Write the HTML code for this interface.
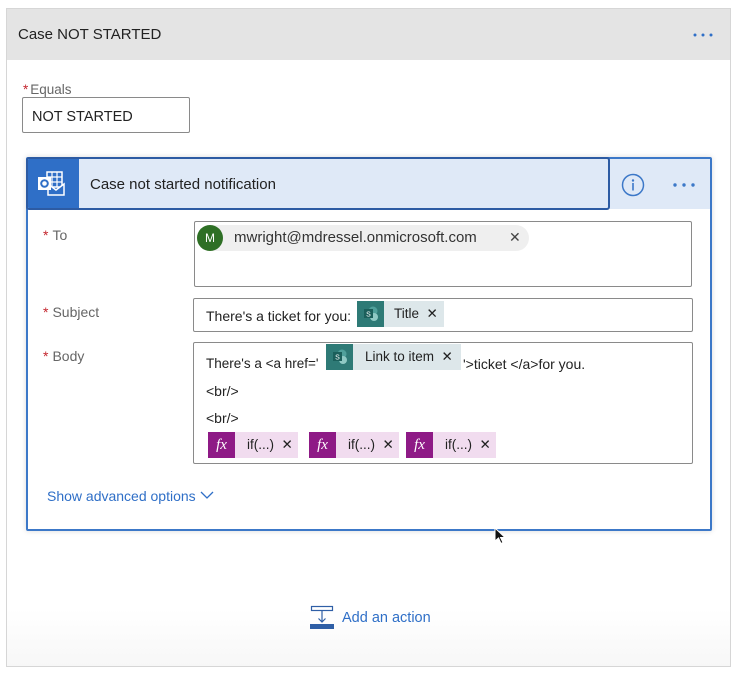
<!DOCTYPE html>
<html><head><meta charset="utf-8"><style>
*{box-sizing:border-box;margin:0;padding:0}
body{width:736px;height:676px;background:#fff;font-family:"Liberation Sans",sans-serif;position:relative;overflow:hidden;color:#222}
.abs{position:absolute}
.outer{left:6px;top:8px;width:725px;height:659px;border:1px solid #d6d6d6;background:linear-gradient(#fff 600px,#f7f7f7)}
.hdr{left:7px;top:9px;width:723px;height:51px;background:#e4e4e4}
.lbl{font-size:14px;color:#666}
.req{color:#c4262e;margin-right:4px}
.box{border:1px solid #8a8a8a;background:#fff;border-radius:2px}
.tok{display:inline-flex;align-items:center;height:26px;vertical-align:middle}
.sp{width:27px;height:26px;background:#2e7a76;display:flex;align-items:center;justify-content:center}
.spt{background:#dde7ea;height:26px;padding:0 6px 0 10px;font-size:13.5px;display:flex;align-items:center;color:#222}
.fx{width:27px;height:26px;background:#8e1a86;color:#fff;font-family:"Liberation Serif",serif;font-style:italic;font-size:15px;display:flex;align-items:center;justify-content:center}
.fxt{background:#f1dcef;height:26px;padding:0 5px 0 12px;font-size:13.5px;display:flex;align-items:center}
.t{font-size:14px;color:#222}
</style></head><body>
<div class="abs outer"></div>
<div class="abs hdr"></div>
<div class="abs" style="left:18px;top:26px;font-size:15px;color:#222">Case NOT STARTED</div>
<svg class="abs" style="left:692px;top:32px" width="24" height="6"><circle cx="3" cy="3" r="1.5" fill="#2f6fc7"/><circle cx="11" cy="3" r="1.5" fill="#2f6fc7"/><circle cx="19" cy="3" r="1.5" fill="#2f6fc7"/></svg>
<div class="abs lbl" style="left:23px;top:82px;font-size:13.5px"><span class="req" style="margin-right:2px">*</span>Equals</div>
<div class="abs box" style="left:22px;top:97px;width:168px;height:36px"></div>
<div class="abs" style="left:32px;top:109px;font-size:14.5px">NOT STARTED</div>

<div class="abs" style="left:26px;top:157px;width:686px;height:374px;border:2px solid #3c78c8;border-radius:2px;background:#fff;box-shadow:0 0 6px rgba(0,0,0,.15)"></div>
<div class="abs" style="left:28px;top:159px;width:682px;height:50px;background:#dfe9f7"></div>
<div class="abs" style="left:26px;top:157px;width:584px;height:53px;border:2px solid #2d5ba3;border-radius:3px;background:#dfe9f7;overflow:hidden">
  <div class="abs" style="left:0;top:0;width:51px;height:49px;background:#2f6fc7"></div>
  <svg class="abs" style="left:9px;top:12px" width="32" height="26" viewBox="0 0 32 26"><rect x="10" y="1" width="15" height="15" fill="none" stroke="#fff" stroke-width="1.5"/><path d="M10 6H25M10 11H25M15 1V16M20 1V16" stroke="#fff" stroke-width="1.2"/><path d="M11 13V24H27V13L19 19Z" fill="#2f6fc7" stroke="#fff" stroke-width="1.5"/><rect x="1" y="6" width="13" height="13" fill="#fff"/><circle cx="7.5" cy="12.5" r="3.3" fill="none" stroke="#2f6fc7" stroke-width="2"/></svg>
  <div class="abs" style="left:62px;top:17px;font-size:15px;color:#222">Case not started notification</div>
</div>
<svg class="abs" style="left:621px;top:173px" width="24" height="24"><circle cx="12" cy="12" r="10.5" fill="none" stroke="#3c78c8" stroke-width="1.5"/><circle cx="12" cy="7.5" r="1.2" fill="#3c78c8"/><rect x="11.2" y="10" width="1.6" height="7.5" fill="#3c78c8"/></svg>
<svg class="abs" style="left:672px;top:182px" width="26" height="6"><circle cx="3" cy="3" r="1.7" fill="#3c78c8"/><circle cx="12" cy="3" r="1.7" fill="#3c78c8"/><circle cx="21" cy="3" r="1.7" fill="#3c78c8"/></svg>

<div class="abs lbl" style="left:43px;top:227px"><span class="req">*</span>To</div>
<div class="abs box" style="left:194px;top:221px;width:498px;height:66px"></div>
<div class="abs" style="left:197px;top:225px;width:332px;height:26px;background:#efefef;border-radius:13px"></div>
<div class="abs" style="left:197px;top:225px;width:26px;height:26px;border-radius:50%;background:#2e6f25;color:#fff;font-size:12px;text-align:center;line-height:26px">M</div>
<div class="abs" style="left:234px;top:229px;font-size:15px;color:#333">mwright@mdressel.onmicrosoft.com</div>
<div class="abs" style="left:509px;top:229px;font-size:14px;color:#444">✕</div>

<div class="abs lbl" style="left:43px;top:304px"><span class="req">*</span>Subject</div>
<div class="abs box" style="left:193px;top:298px;width:500px;height:34px"></div>
<div class="abs t" style="left:206px;top:308px">There's a ticket for you:</div>
<div class="abs tok" style="left:357px;top:301px"><div class="sp"><svg width="16" height="16"><circle cx="10" cy="5" r="4.5" fill="#4fa09b"/><circle cx="11" cy="11" r="4" fill="#8fc9c4"/><rect x="1" y="3" width="9" height="9" fill="#1b5f5b"/><text x="5.5" y="10.5" font-size="7" fill="#fff" text-anchor="middle" font-family="Liberation Sans">S</text></svg></div><div class="spt">Title&nbsp;&nbsp;✕</div></div>

<div class="abs lbl" style="left:43px;top:348px"><span class="req">*</span>Body</div>
<div class="abs box" style="left:193px;top:342px;width:500px;height:122px"></div>
<div class="abs t" style="left:206px;top:356px;font-size:13.5px">There's a &lt;a href='</div>
<div class="abs tok" style="left:326px;top:344px"><div class="sp"><svg width="16" height="16"><circle cx="10" cy="5" r="4.5" fill="#4fa09b"/><circle cx="11" cy="11" r="4" fill="#8fc9c4"/><rect x="1" y="3" width="9" height="9" fill="#1b5f5b"/><text x="5.5" y="10.5" font-size="7" fill="#fff" text-anchor="middle" font-family="Liberation Sans">S</text></svg></div><div class="spt" style="padding:0 8px 0 12px">Link to item&nbsp;&nbsp;✕</div></div>
<div class="abs t" style="left:463px;top:356px">'&gt;ticket &lt;/a&gt;for you.</div>
<div class="abs t" style="left:206px;top:383px">&lt;br/&gt;</div>
<div class="abs t" style="left:206px;top:410px">&lt;br/&gt;</div>
<div class="abs tok" style="left:208px;top:432px"><div class="fx">fx</div><div class="fxt">if(...)&nbsp;&nbsp;✕</div></div>
<div class="abs tok" style="left:309px;top:432px"><div class="fx">fx</div><div class="fxt">if(...)&nbsp;&nbsp;✕</div></div>
<div class="abs tok" style="left:406px;top:432px"><div class="fx">fx</div><div class="fxt">if(...)&nbsp;&nbsp;✕</div></div>

<div class="abs" style="left:47px;top:488px;font-size:14px;color:#2f6fc7">Show advanced options</div>
<svg class="abs" style="left:200px;top:490px" width="14" height="10"><path d="M1 2L7 8L13 2" fill="none" stroke="#2f6fc7" stroke-width="1.3"/></svg>

<svg class="abs" style="left:494px;top:527px" width="12" height="18"><path d="M1 1V14L4.5 11L7 16.5L9 15.5L6.5 10.5H11Z" fill="#111" stroke="#fff" stroke-width="1"/></svg>

<svg class="abs" style="left:310px;top:605px" width="24" height="25"><rect x="1.5" y="1.5" width="21" height="4" fill="#fff" stroke="#2f5fa6" stroke-width="1.2"/><path d="M12 6V17M8.5 13.5L12 17L15.5 13.5" fill="none" stroke="#2f5fa6" stroke-width="1.2"/><rect x="0" y="19" width="24" height="5" fill="#2f5fa6"/></svg>
<div class="abs" style="left:342px;top:610px;font-size:14.5px;color:#2f6fc7">Add an action</div>
</body></html>
